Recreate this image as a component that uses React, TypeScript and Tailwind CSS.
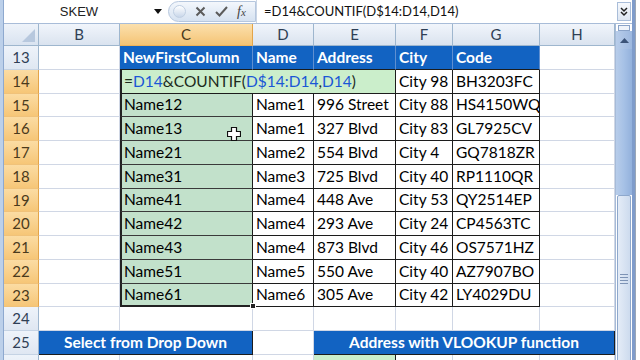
import React from 'react';

type DataRow = { n: number; c: string; d: string; e: string; f: string; g: string };

const dataRows: DataRow[] = [
  { n: 15, c: 'Name12', d: 'Name1', e: '996 Street', f: 'City 88', g: 'HS4150WQ' },
  { n: 16, c: 'Name13', d: 'Name1', e: '327 Blvd', f: 'City 83', g: 'GL7925CV' },
  { n: 17, c: 'Name21', d: 'Name2', e: '554 Blvd', f: 'City 4', g: 'GQ7818ZR' },
  { n: 18, c: 'Name31', d: 'Name3', e: '725 Blvd', f: 'City 40', g: 'RP1110QR' },
  { n: 19, c: 'Name41', d: 'Name4', e: '448 Ave', f: 'City 53', g: 'QY2514EP' },
  { n: 20, c: 'Name42', d: 'Name4', e: '293 Ave', f: 'City 24', g: 'CP4563TC' },
  { n: 21, c: 'Name43', d: 'Name4', e: '873 Blvd', f: 'City 46', g: 'OS7571HZ' },
  { n: 22, c: 'Name51', d: 'Name5', e: '550 Ave', f: 'City 40', g: 'AZ7907BO' },
  { n: 23, c: 'Name61', d: 'Name6', e: '305 Ave', f: 'City 42', g: 'LY4029DU' },
];

const font = { fontFamily: 'Lato, "Open Sans", sans-serif' };

const plain = 'border-r border-b border-[#d0d7e5] bg-white';
const tableCell = 'border-r border-b border-[#1c1c1c] bg-white px-[3px] flex items-center whitespace-nowrap overflow-hidden';
const blueHead = 'border-r border-b border-r-[#5f8fd0] border-b-[#1c1c1c] bg-[#1263c2] text-white font-bold px-[3px] flex items-center whitespace-nowrap';

const RowNum = ({ n, active }: { n?: number; active?: boolean }) => (
  <div
    className={
      active
        ? 'flex items-center justify-center border-r border-b border-r-[#e3a449] border-b-[#f0c27a] bg-gradient-to-b from-[#fbdca3] to-[#f6c677] text-[#4a3a1c] text-[15px]'
        : 'flex items-center justify-center border-r border-b border-r-[#9eb6ce] border-b-[#c5d3e4] bg-gradient-to-b from-[#eef3fa] to-[#dfe7f2] text-[#2f3f55] text-[15px]'
    }
  >
    {n}
  </div>
);

const Ref = ({ children }: { children: React.ReactNode }) => <span className="text-[#1a57d6]">{children}</span>;

const Cursor = () => (
  <svg className="absolute left-[105px] top-[10px]" width="14" height="14" viewBox="0 0 14 14">
    <path d="M4.5 0.5h5v4h4v5h-4v4h-5v-4h-4v-5h4z" fill="#fff" stroke="#111" strokeWidth="1.2" />
  </svg>
);

export default function App() {
  return (
    <div className="w-[640px] h-[360px] overflow-hidden flex bg-white text-black" style={font}>
      <div className="w-[4px] h-full bg-[#bcd0ea] border-r border-[#8ea9cf]" />
      <div className="w-[628px] h-full flex flex-col">
        {/* formula bar */}
        <div className="h-[24px] flex items-stretch bg-white border-b border-[#a8bcd8]">
          <div className="w-[164px] relative flex items-center justify-center text-[13px] text-[#222]">
            <span className="ml-[-14px]" style={{ fontFamily: '"Liberation Sans", sans-serif' }}>SKEW</span>
            <svg className="absolute right-[6px] top-[9px]" width="8" height="5" viewBox="0 0 8 5">
              <path d="M0 0h8L4 5z" fill="#111" />
            </svg>
          </div>
          <div className="w-[88px] my-[1px] rounded-l-full border border-[#b6c7de] bg-gradient-to-b from-[#f3f7fc] to-[#d6e2f1] flex items-center gap-[9px] pl-[4px]">
            <div className="w-[13px] h-[13px] rounded-full bg-gradient-to-b from-[#ffffff] to-[#c9d7ea] border border-[#c0cfe2]" />
            <svg width="11" height="11" viewBox="0 0 11 11">
              <path d="M1.5 1.5l8 8M9.5 1.5l-8 8" stroke="#5b5b5b" strokeWidth="2" />
            </svg>
            <svg width="13" height="11" viewBox="0 0 13 11">
              <path d="M1 6l3.5 3.5L12 1" stroke="#5b5b5b" strokeWidth="2" fill="none" />
            </svg>
            <span className="text-[14px] italic text-[#444]" style={{ fontFamily: '"Liberation Serif", serif' }}>
              f<span className="text-[11px]">x</span>
            </span>
          </div>
          <div className="flex-1 flex items-center pl-[7px] text-[13px] text-[#111] border-l border-[#c9d5e6]">
            =D14&amp;COUNTIF(D$14:D14,D14)
          </div>
          <div className="w-[14px] my-[2px] mr-[1px] border border-[#a9bdd9] bg-gradient-to-b from-[#f7f9fc] to-[#dde6f2] flex items-center justify-center">
            <svg width="8" height="10" viewBox="0 0 8 10">
              <path d="M1 1l3 3 3-3M1 5l3 3 3-3" stroke="#222" strokeWidth="1.5" fill="none" />
            </svg>
          </div>
        </div>
        <div className="h-[2px] bg-[#dce6f4]" />
        <div className="flex-1 flex">
          {/* sheet */}
          <div className="w-[611px] grid grid-cols-[35px_81px_133px_61px_82px_57px_87px_75px] grid-rows-[22px] auto-rows-[23.75px] text-[15.5px] content-start">
            {/* column headers */}
            <div className="relative border-r border-b border-[#9eb6ce] bg-gradient-to-b from-[#eef3fa] to-[#d9e3f0]">
              <div className="absolute right-[3px] bottom-[3px] w-0 h-0 border-l-[13px] border-l-transparent border-b-[13px] border-b-[#b7c8de]" />
            </div>
            {['B', 'C', 'D', 'E', 'F', 'G', 'H'].map((h) => (
              <div
                key={h}
                className={
                  h === 'C'
                    ? 'flex items-center justify-center border-r border-b border-r-[#e3a449] border-b-[#f0b45a] bg-gradient-to-b from-[#fbe0ad] to-[#f5c474] text-[#4a3a1c] text-[15px]'
                    : 'flex items-center justify-center border-r border-b border-[#9eb6ce] bg-gradient-to-b from-[#f1f5fb] to-[#dae3ef] text-[#2f3f55] text-[15px]'
                }
              >
                {h}
              </div>
            ))}

            {/* row 13 */}
            <RowNum n={13} />
            <div className={plain} />
            <div className={blueHead}>NewFirstColumn</div>
            <div className={blueHead}>Name</div>
            <div className={blueHead}>Address</div>
            <div className={blueHead}>City</div>
            <div className={`${blueHead} border-r-[#1c1c1c]`}>Code</div>
            <div className={plain} />

            {/* row 14 */}
            <RowNum n={14} active />
            <div className={plain} />
            <div className="col-span-3 border-r border-b border-[#1c1c1c] border-l-2 border-l-[#222] bg-[#cbeecb] px-[2px] flex items-center whitespace-nowrap text-[#1d2b1d]">
              =<Ref>D14</Ref>&amp;COUNTIF(<Ref>D$14:D14</Ref>,<Ref>D14</Ref>)
            </div>
            <div className={tableCell}>City 98</div>
            <div className={tableCell}>BH3203FC</div>
            <div className={plain} />

            {dataRows.map((r, i) => (
              <React.Fragment key={r.n}>
                <RowNum n={r.n} active />
                <div className={plain} />
                <div
                  className={`relative border-l-2 border-l-[#222] border-r border-r-[#1c1c1c] ${
                    i === dataRows.length - 1 ? 'border-b-2 border-b-[#222]' : 'border-b border-b-[#3a3a3a]'
                  } bg-[#c2e1cb] px-[2px] flex items-center whitespace-nowrap`}
                >
                  {r.c}
                  {i === 1 && <Cursor />}
                  {i === dataRows.length - 1 && (
                    <div className="absolute right-[-4px] bottom-[-4px] w-[6px] h-[6px] bg-[#222] border border-white z-10" />
                  )}
                </div>
                <div className={tableCell}>{r.d}</div>
                <div className={tableCell}>{r.e}</div>
                <div className={tableCell}>{r.f}</div>
                <div className={tableCell}>{r.g}</div>
                <div className={plain} />
              </React.Fragment>
            ))}

            {/* row 24 */}
            <RowNum n={24} />
            {[0, 1, 2, 3, 4, 5, 6].map((k) => (
              <div key={k} className={plain} />
            ))}

            {/* row 25 */}
            <RowNum n={25} />
            <div className="col-span-2 border-r border-b border-[#1c1c1c] bg-[#1263c2] text-white font-bold flex items-center justify-center">
              Select from Drop Down
            </div>
            <div className={plain} />
            <div className="col-span-4 border-r border-b border-[#1c1c1c] bg-[#1263c2] text-white font-bold flex items-center justify-center">
              Address with VLOOKUP function
            </div>

            {/* row 26, only its top edge shows */}
            <RowNum />
            <div className={plain} />
            <div className={plain} />
            <div className={plain} />
            <div className="border-r border-b border-[#1c1c1c] bg-[#cbeecb]" />
            <div className={plain} />
            <div className={plain} />
            <div className={plain} />
          </div>
          {/* vertical scrollbar */}
          <div className="w-[17px] flex flex-col border-l border-[#a6bbd8]">
            <div className="h-[6px] mx-[2px] mt-[1px] border border-[#8aa3c8] bg-[#eef3fa]" />
            <div className="h-[18px] flex items-center justify-center bg-gradient-to-r from-[#b8cdea] to-[#9db8df]">
              <svg width="9" height="5" viewBox="0 0 9 5">
                <path d="M0 5L4.5 0 9 5z" fill="#3b5378" />
              </svg>
            </div>
            <div className="h-[146px] bg-gradient-to-r from-[#b8cdea] via-[#a6c1e6] to-[#93b1dc]" />
            <div className="flex-1 mx-[1px] border border-[#8ea8cc] rounded-[2px] bg-gradient-to-r from-[#e4ecf7] to-[#cddbee] flex flex-col items-center pt-[78px] gap-[2px]">
              <div className="w-[8px] h-[1px] bg-[#7d93b5]" />
              <div className="w-[8px] h-[1px] bg-[#7d93b5]" />
              <div className="w-[8px] h-[1px] bg-[#7d93b5]" />
              <div className="w-[8px] h-[1px] bg-[#7d93b5]" />
            </div>
          </div>
        </div>
      </div>
      <div className="w-[8px] h-full flex">
        <div className="w-[3px] h-full bg-[#7f9ccb]" />
        <div className="flex-1 h-full bg-white border-l border-[#9aa6b6]" />
      </div>
    </div>
  );
}
